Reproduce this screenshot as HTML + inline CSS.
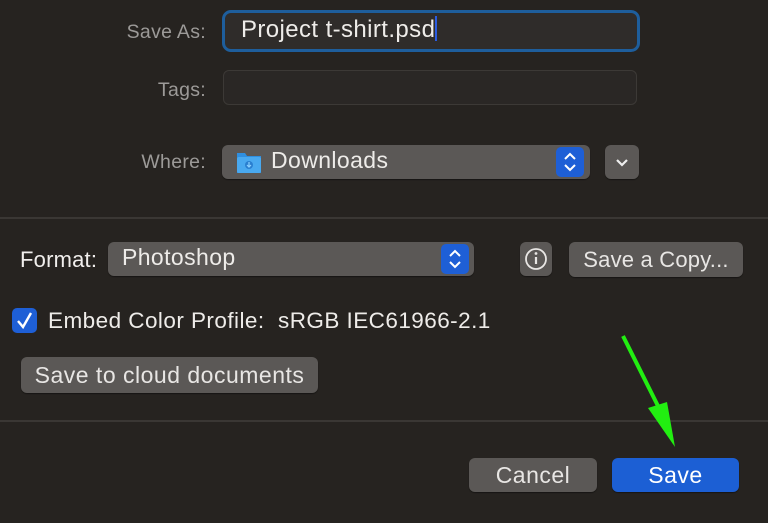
<!DOCTYPE html><html><head><style>
body{margin:0;width:768px;height:523px;background:#262320;font-family:"Liberation Sans",sans-serif;position:relative;overflow:hidden;color:#e6e4e2}
.a{position:absolute}
.lbl{color:#9c9a98;font-size:19.5px;text-align:right;width:200px;left:6px;letter-spacing:.3px}
.btn{background:#5b5856;border-radius:6px;color:#e8e6e4;font-size:22px;letter-spacing:.5px;box-shadow:0 1px 1px rgba(0,0,0,.4)}
.step{background:#1e5fd6;border-radius:5px}
</style></head><body>
<div class="a lbl" style="top:21px">Save As:</div>
<div class="a" style="left:222px;top:10px;width:412px;height:36px;border:3px solid #1e5e9c;border-radius:9px;background:#2f2c2a"></div>
<div class="a" style="left:241px;top:16px;font-size:24px;letter-spacing:.4px;color:#eeece9">Project t-shirt.psd<span style="display:inline-block;width:2px;height:25px;background:#2a5be0;vertical-align:-4px"></span></div>
<div class="a lbl" style="top:79px">Tags:</div>
<div class="a" style="left:223px;top:70px;width:412px;height:33px;border:1px solid #3c3936;border-radius:6px;background:#2a2725"></div>
<div class="a lbl" style="top:151px">Where:</div>
<div class="a btn" style="left:222px;top:145px;width:368px;height:34px"></div>
<svg class="a" style="left:236px;top:149px" width="26" height="26" viewBox="0 0 26 26"><path d="M1 4h8l2 3h14v17H1z" fill="#2f8fe0"/><rect x="1" y="8" width="24" height="16" rx="2" fill="#49a9f0"/><circle cx="13" cy="16" r="4" fill="#2a7fd0"/><path d="M13 13v5M11 16l2 2 2-2" stroke="#8cd0ff" stroke-width="1.2" fill="none"/></svg>
<div class="a" style="left:271px;top:147px;font-size:23px;letter-spacing:.4px;color:#eeece9">Downloads</div>
<div class="a step" style="left:556px;top:147px;width:28px;height:30px"></div>
<svg class="a" style="left:556px;top:147px" width="28" height="30"><path d="M9 12l5-5 5 5M9 18l5 5 5-5" stroke="#fff" stroke-width="2" fill="none"/></svg>
<div class="a btn" style="left:605px;top:145px;width:34px;height:34px"></div>
<svg class="a" style="left:605px;top:145px" width="34" height="34"><path d="M12 15l5 5 5-5" stroke="#eee" stroke-width="2.2" fill="none"/></svg>
<div class="a" style="left:0;top:217px;width:768px;height:2px;background:#3a3734"></div>
<div class="a" style="left:20px;top:247px;font-size:22px;letter-spacing:.2px;color:#f0eeec">Format:</div>
<div class="a btn" style="left:108px;top:242px;width:366px;height:34px"></div>
<div class="a" style="left:122px;top:244px;font-size:23px;letter-spacing:.4px;color:#eeece9">Photoshop</div>
<div class="a step" style="left:441px;top:244px;width:28px;height:30px"></div>
<svg class="a" style="left:441px;top:244px" width="28" height="30"><path d="M9 12l5-5 5 5M9 18l5 5 5-5" stroke="#fff" stroke-width="2" fill="none"/></svg>
<div class="a btn" style="left:520px;top:242px;width:32px;height:34px"></div>
<svg class="a" style="left:520px;top:242px" width="32" height="34"><circle cx="16" cy="17" r="10" stroke="#e8e6e4" stroke-width="1.8" fill="none"/><path d="M16 15v7" stroke="#e8e6e4" stroke-width="2.2"/><circle cx="16" cy="11.5" r="1.4" fill="#e8e6e4"/></svg>
<div class="a btn" style="left:569px;top:242px;width:174px;height:35px;line-height:35px;text-align:center;letter-spacing:.2px">Save a Copy...</div>
<div class="a" style="left:12px;top:308px;width:25px;height:25px;background:#1e5fd6;border-radius:5px"></div>
<svg class="a" style="left:12px;top:308px" width="25" height="25"><path d="M6 13l5 6 8-14" stroke="#fff" stroke-width="2.4" fill="none"/></svg>
<div class="a" style="left:48px;top:308px;font-size:22.5px;letter-spacing:.45px;color:#eeece9;white-space:pre">Embed Color Profile:  sRGB IEC61966-2.1</div>
<div class="a btn" style="left:21px;top:357px;width:297px;height:36px;line-height:36px;text-align:center;font-size:23px">Save to cloud documents</div>
<div class="a" style="left:0;top:420px;width:768px;height:2px;background:#3a3734"></div>
<div class="a btn" style="left:469px;top:458px;width:128px;height:34px;line-height:34px;text-align:center;font-size:23px">Cancel</div>
<div class="a btn" style="left:612px;top:458px;width:127px;height:34px;line-height:34px;text-align:center;background:#1c5fd4;color:#fff;font-size:23px">Save</div>
<svg class="a" style="left:0;top:0" width="768" height="523"><path d="M623 336L660 410" stroke="#22ee11" stroke-width="4"/><path d="M648 408L667 402L675 447Z" fill="#22ee11"/></svg>
</body></html>
